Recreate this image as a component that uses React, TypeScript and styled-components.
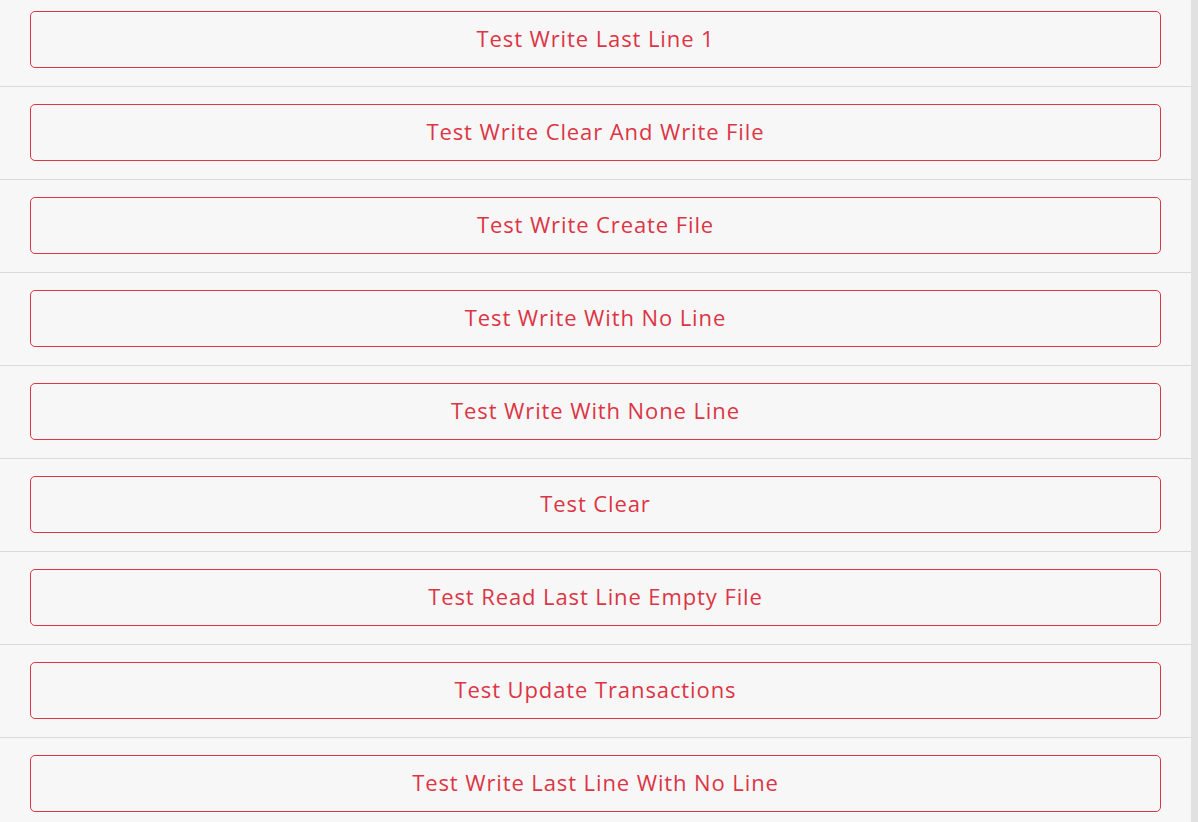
import styled, { createGlobalStyle } from 'styled-components';

const GlobalStyle = createGlobalStyle`
    html, body {
        margin: 0;
        padding: 0;
        height: 100%;
        overflow: hidden;
        background: #f7f7f7;
    }
`;

const StyledPage = styled.div`
    display: flex;
    height: 822px;
    overflow: hidden;
`;

const StyledList = styled.ul`
    flex: 1;
    list-style-type: none;
    margin: 0;
    padding: 0;
`;

const StyledRow = styled.li`
    padding: 17px 30px 18px;
    border-bottom: 1px solid #dadada;

    &:first-child {
        padding-top: 11px;
    }
`;

const StyledButton = styled.button`
    display: block;
    width: 100%;
    height: 57px;
    padding: 0 0 3px;
    background: transparent;
    border: 1px solid #dc3545;
    border-radius: 5px;
    color: #dc3545;
    font-size: 22px;
    letter-spacing: 0.9px;
    font-family: 'Open Sans', sans-serif;
    cursor: pointer;
`;

const StyledTrack = styled.div`
    width: 7px;
    flex-shrink: 0;
    background: #e1e1e1;
`;

const tests = [
    'Test Write Last Line 1',
    'Test Write Clear And Write File',
    'Test Write Create File',
    'Test Write With No Line',
    'Test Write With None Line',
    'Test Clear',
    'Test Read Last Line Empty File',
    'Test Update Transactions',
    'Test Write Last Line With No Line',
];

export default function App() {
    return (
        <>
            <GlobalStyle />
            <StyledPage>
                <StyledList>
                    {tests.map((name) => (
                        <StyledRow key={name}>
                            <StyledButton>{name}</StyledButton>
                        </StyledRow>
                    ))}
                </StyledList>
                <StyledTrack />
            </StyledPage>
        </>
    );
}
